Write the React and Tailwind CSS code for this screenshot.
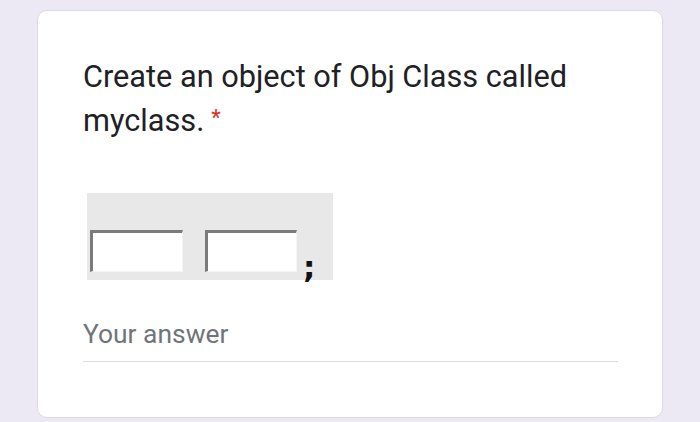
export default function App() {
  return (
    <div className="w-[700px] h-[422px] bg-[#ece9f5] pt-[10px] pl-[37px] overflow-hidden" style={{ fontFamily: "Roboto, 'Liberation Sans', sans-serif" }}>
      <div className="w-[626px] h-[408px] bg-white rounded-[10px] border border-[#dcdae4] pl-[45px] pt-[44px]">
        <div className="text-[30.7px] leading-[44px] text-[#202124] w-[540px]">
          Create an object of Obj Class called myclass.<span className="text-[#d93025] text-[22px] leading-none ml-[7px] relative -top-[6px]">*</span>
        </div>
        <div className="mt-[50px] ml-[4px] w-[246px] h-[87px] bg-[#e8e8e8] flex items-end gap-[22px] pl-[3px]">
          <div className="mb-[8px] w-[93px] h-[42px] bg-white border-t-[3px] border-l-[3px] border-t-[#7b7b7b] border-l-[#7b7b7b] border-b border-r border-b-[#f4f4f4] border-r-[#f4f4f4]" />
          <div className="flex items-end gap-[6px]">
            <div className="mb-[8px] w-[92px] h-[42px] bg-white border-t-[3px] border-l-[3px] border-t-[#7b7b7b] border-l-[#7b7b7b] border-b border-r border-b-[#f4f4f4] border-r-[#f4f4f4]" />
            <span className="text-[31px] font-bold leading-[30px] text-[#111111] -mb-[2px]" style={{ fontFamily: "'DejaVu Sans', sans-serif" }}>;</span>
          </div>
        </div>
        <div className="mt-[38px] w-[535px]">
          <div className="text-[26.4px] leading-[32px] text-[#70757a]">Your answer</div>
          <div className="mt-[11px] h-[1px] bg-[#dadce0]" />
        </div>
      </div>
    </div>
  );
}
